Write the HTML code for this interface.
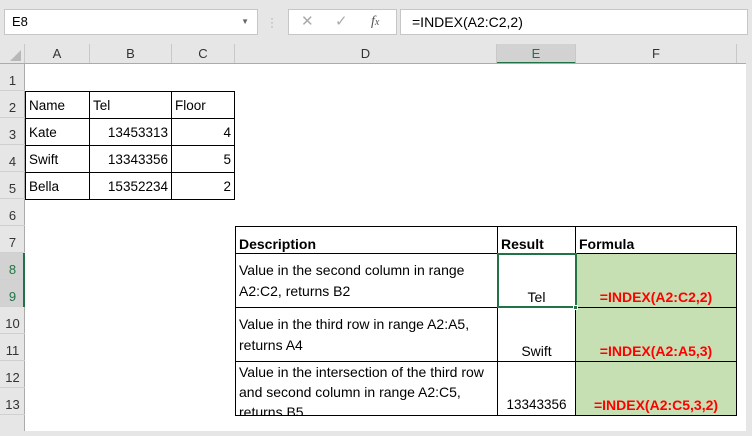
<!DOCTYPE html>
<html><head><style>
*{margin:0;padding:0;box-sizing:border-box}
body{width:752px;height:436px;background:#e6e6e6;position:relative;overflow:hidden;font-family:"Liberation Sans",Arial,sans-serif;font-size:13px;color:#000}
.a{position:absolute}
.box{background:#fff;border:1px solid #c6c6c6}
.hd{position:absolute;top:44px;height:20px;text-align:center;line-height:20px;color:#333;font-size:13px;border-right:1px solid #c8c8c8}
.rh{position:absolute;left:0;width:25px;height:27px;text-align:center;line-height:34px;color:#333;font-size:13px;border-bottom:1px solid #d0d0d0}
.c{position:absolute;border:1px solid #000;padding:0 3px;line-height:27px;white-space:nowrap;font-size:13.5px;overflow:hidden}
.r{text-align:right}
.g{background:#c6e0b4;color:#f00;font-weight:bold;text-align:center}
.t2{font-size:14px}
</style></head><body>
<div class="a box" style="left:4px;top:9px;width:254px;height:26px;line-height:24px;padding-left:7px;font-size:13px">E8<span style="position:absolute;right:8px;top:0;font-size:8px;color:#666">▼</span></div>
<div class="a" style="left:270px;top:16px;color:#aaa;font-size:12px;line-height:4px">·<br>·<br>·</div>
<div class="a box" style="left:288px;top:9px;width:109px;height:26px;color:#aaa;font-size:15px;line-height:24px">
<span class="a" style="left:12px">✕</span><span class="a" style="left:46px">✓</span><span class="a" style="left:82px;color:#555;font-family:'Liberation Serif',serif;font-style:italic;font-size:14px">f<span style="font-size:10px">x</span></span></div>
<div class="a box" style="left:400px;top:9px;width:348px;height:26px;line-height:24px;padding-left:11px;font-size:14px">=INDEX(A2:C2,2)</div>
<div class="a" style="left:0;top:64px;width:746px;height:367px;background:#fff"></div>
<div class="hd" style="left:0;width:25px"><span style="position:absolute;right:3px;bottom:3px;width:0;height:0;border-left:11px solid transparent;border-bottom:11px solid #b8b8b8"></span></div>
<div class="hd" style="left:25px;width:65px">A</div>
<div class="hd" style="left:90px;width:82px">B</div>
<div class="hd" style="left:172px;width:63px">C</div>
<div class="hd" style="left:235px;width:262px">D</div>
<div class="hd" style="left:497px;width:79px;background:#d2d2d2;color:#217346;border-bottom:2px solid #217346">E</div>
<div class="hd" style="left:576px;width:161px">F</div>
<div class="a" style="left:0;top:63px;width:746px;height:1px;background:#ababab"></div>
<div class="a" style="left:0;top:64px;width:25px;height:367px;background:#e6e6e6;border-right:1px solid #ababab"></div>
<div class="rh" style="top:64px">1</div><div class="rh" style="top:91px">2</div><div class="rh" style="top:118px">3</div><div class="rh" style="top:145px">4</div><div class="rh" style="top:172px">5</div><div class="rh" style="top:199px">6</div><div class="rh" style="top:226px">7</div>
<div class="rh" style="top:253px;background:#d2d2d2;color:#217346">8</div><div class="rh" style="top:280px;background:#d2d2d2;color:#217346">9</div>
<div class="rh" style="top:307px">10</div><div class="rh" style="top:334px">11</div><div class="rh" style="top:361px">12</div><div class="rh" style="top:388px">13</div>
<div class="a" style="left:23px;top:253px;width:2px;height:54px;background:#217346"></div>
<!-- table 1 -->
<div class="c" style="left:25px;top:91px;width:65px;height:28px">Name</div>
<div class="c" style="left:89px;top:91px;width:83px;height:28px">Tel</div>
<div class="c" style="left:171px;top:91px;width:64px;height:28px">Floor</div>
<div class="c" style="left:25px;top:118px;width:65px;height:28px">Kate</div>
<div class="c r" style="left:89px;top:118px;width:83px;height:28px">13453313</div>
<div class="c r" style="left:171px;top:118px;width:64px;height:28px">4</div>
<div class="c" style="left:25px;top:145px;width:65px;height:28px">Swift</div>
<div class="c r" style="left:89px;top:145px;width:83px;height:28px">13343356</div>
<div class="c r" style="left:171px;top:145px;width:64px;height:28px">5</div>
<div class="c" style="left:25px;top:172px;width:65px;height:28px">Bella</div>
<div class="c r" style="left:89px;top:172px;width:83px;height:28px">15352234</div>
<div class="c r" style="left:171px;top:172px;width:64px;height:28px">2</div>
<!-- table 2 -->
<div class="c t2" style="left:235px;top:226px;width:263px;height:28px;font-weight:bold;line-height:34px">Description</div>
<div class="c t2" style="left:497px;top:226px;width:79px;height:28px;font-weight:bold;line-height:34px">Result</div>
<div class="c t2" style="left:575px;top:226px;width:162px;height:28px;font-weight:bold;line-height:34px">Formula</div>
<div class="c t2" style="left:235px;top:253px;width:263px;height:55px;line-height:21px;padding-top:6px">Value in the second column in range<br>A2:C2, returns B2</div>
<div class="c t2" style="left:497px;top:253px;width:79px;height:55px;text-align:center;line-height:24px;padding-top:31px">Tel</div>
<div class="c g t2" style="left:575px;top:253px;width:162px;height:55px;line-height:24px;padding-top:31px">=INDEX(A2:C2,2)</div>
<div class="c t2" style="left:235px;top:307px;width:263px;height:55px;line-height:21px;padding-top:6px">Value in the third row in range A2:A5,<br>returns A4</div>
<div class="c t2" style="left:497px;top:307px;width:79px;height:55px;text-align:center;line-height:24px;padding-top:31px">Swift</div>
<div class="c g t2" style="left:575px;top:307px;width:162px;height:55px;line-height:24px;padding-top:31px">=INDEX(A2:A5,3)</div>
<div class="c t2" style="left:235px;top:361px;width:263px;height:55px;line-height:20px;padding-top:0">Value in the intersection of the third row<br>and second column in range A2:C5,<br>returns B5</div>
<div class="c" style="left:497px;top:361px;width:79px;height:55px;text-align:center;line-height:24px;padding-top:31px">13343356</div>
<div class="c g t2" style="left:575px;top:361px;width:162px;height:55px;line-height:24px;padding-top:31px">=INDEX(A2:C5,3,2)</div>
<div class="a" style="left:497px;top:253px;width:80px;height:55px;border:2px solid #217346"></div>
<div class="a" style="left:573px;top:305px;width:5px;height:5px;background:#217346;border:1px solid #fff"></div>
</body></html>
